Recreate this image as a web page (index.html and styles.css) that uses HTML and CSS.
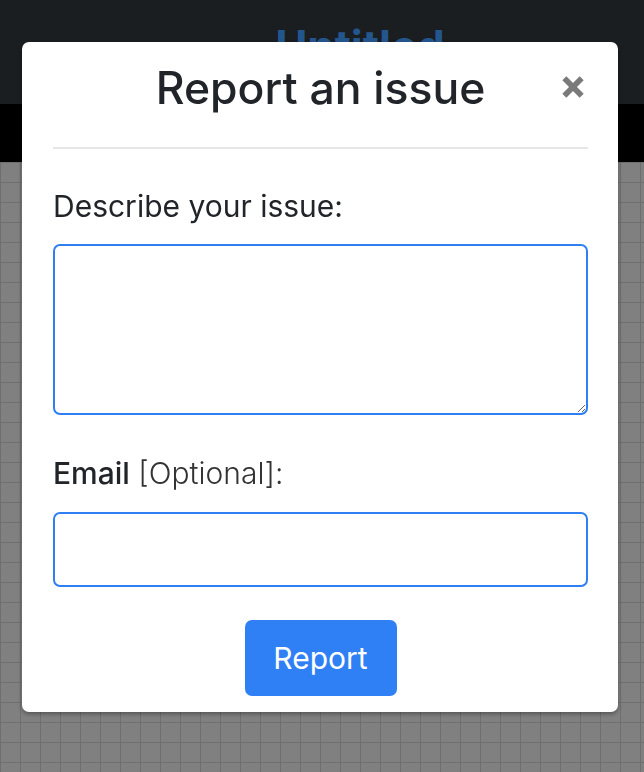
FILE: index.html
```html
<!DOCTYPE html>
<html lang="en">
<head>
<meta charset="utf-8">
<title>Report an issue</title>
<link rel="stylesheet" href="styles.css">
</head>
<body>
<div class="app">
  <header class="topbar"><span class="brand">Untitled</span></header>
  <div class="toolbar"></div>
  <main class="canvas"></main>
</div>
<div class="backdrop">
  <section class="modal">
    <div class="modal-head">
      <h1 class="modal-title">Report an issue</h1>
      <button class="close" aria-label="Close">
        <svg viewBox="0 0 24 24" width="26" height="26"><path d="M4 4 L20 20 M20 4 L4 20" stroke="#7a7a7a" stroke-width="5.2" stroke-linecap="butt"/></svg>
      </button>
    </div>
    <hr class="divider">
    <form class="form">
      <label class="label label-desc">Describe your issue:</label>
      <textarea class="field field-area"></textarea>
      <label class="label label-email"><span class="strong">Email</span> <span class="light">[Optional]:</span></label>
      <input class="field field-input" type="text">
      <div class="actions"><button type="button" class="btn">Report</button></div>
    </form>
  </section>
</div>
</body>
</html>
```
FILE: styles.css
```css
html, body {
  margin: 0;
  padding: 0;
  width: 644px;
  height: 772px;
  overflow: hidden;
  font-family: "Inter", "Roboto", "Liberation Sans", sans-serif;
}
.app {
  display: flex;
  flex-direction: column;
  height: 772px;
}
.topbar {
  height: 104px;
  background: #1b1e21;
  display: flex;
  justify-content: center;
  padding-left: 76px;
  box-sizing: border-box;
}
.brand {
  margin-top: 20px;
  font-size: 44px;
  font-weight: 700;
  color: #24568e;
  line-height: 52px;
}
.toolbar {
  height: 58px;
  background: #000;
}
.canvas {
  flex: 1;
  background-color: #808080;
  background-image:
    linear-gradient(to right, #6f6f6f 1px, transparent 1px),
    linear-gradient(to bottom, #6f6f6f 1px, transparent 1px);
  background-size: 20px 20px;
  background-position: 0 0, 0 0;
}
.backdrop {
  position: fixed;
  inset: 0;
  display: flex;
  justify-content: flex-start;
  align-items: flex-start;
  padding: 42px 0 0 22px;
}
.modal {
  width: 596px;
  height: 670px;
  box-sizing: border-box;
  background: #fff;
  border-radius: 7px;
  box-shadow: 0 2px 4px rgba(0,0,0,0.35);
  padding: 0 30px 0 31px;
}
.modal-head {
  position: relative;
  padding: 22px 0 35px;
  text-align: center;
}
.modal-title {
  margin: 0;
  font-size: 44.5px;
  line-height: 48px;
  font-weight: 500;
  color: #212529;
}
.close {
  position: absolute;
  right: 2px;
  top: 32px;
  border: 0;
  background: none;
  padding: 0;
  width: 26px;
  height: 26px;
  display: flex;
}
.divider {
  margin: 0;
  border: 0;
  border-top: 2px solid #e6e6e6;
}
.form {
  display: flex;
  flex-direction: column;
}
.label {
  font-size: 30px;
  line-height: 34px;
  color: #212529;
}
.label-desc { margin-top: 40px; }
.label-email { margin-top: 41px; }
.strong { font-weight: 500; }
.light { font-weight: 300; color: #333; }
.field {
  display: block;
  width: 100%;
  box-sizing: border-box;
  border: 2px solid #2f7ff2;
  border-radius: 7px;
  background: #fff;
  outline: none;
  font: inherit;
}
.field-area {
  margin-top: 21px;
  height: 171px;
  resize: vertical;
}
.field-input {
  margin-top: 22px;
  height: 75px;
}
.actions {
  display: flex;
  justify-content: center;
  margin-top: 33px;
}
.btn {
  width: 152px;
  height: 76px;
  border: 0;
  border-radius: 7px;
  background: #2f80f5;
  color: #fff;
  font-family: inherit;
  font-size: 30px;
  font-weight: 400;
}
```
